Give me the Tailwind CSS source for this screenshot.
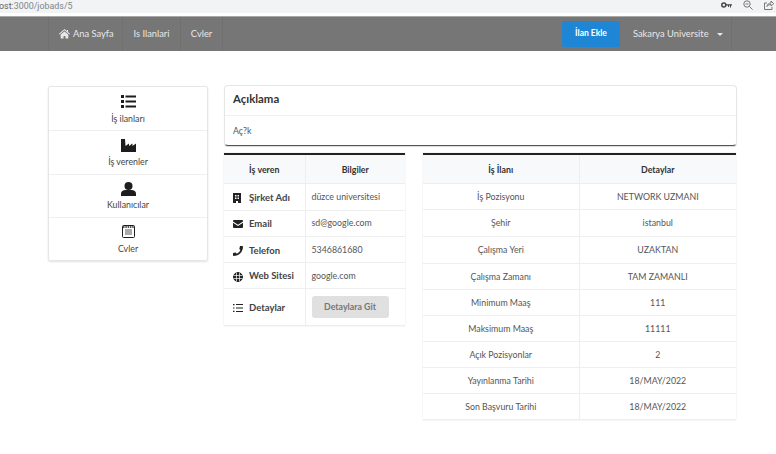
<!DOCTYPE html>
<html lang="en">
<head>
  <meta charset="UTF-8" />
  <meta name="viewport" content="width=device-width, initial-scale=1.0" />
  <title>Job Ad Details</title>
  <script src="https://cdn.jsdelivr.net/npm/@tailwindcss/browser@4"></script>
</head>
<body class="bg-white text-[#212121] h-[454px] overflow-hidden font-['Lato','Open_Sans',sans-serif] text-[8.8px]">
  <!-- Browser bar -->
  <div class="h-[13px] bg-[#f1f3f4] flex items-center justify-between overflow-hidden">
    <span class="text-[8.9px] text-[#80868b] -ml-[1px] font-['Roboto',sans-serif]"><span class="text-[#5f6368]">ost:</span>3000/jobads/5</span>
    <div class="flex items-center gap-[11px] pr-[2px] -mt-[4px] text-[#5f6368]">
      <svg width="11" height="8" viewBox="0 0 11 8"><circle cx="2.800" cy="4" r="2" fill="none" stroke="#444" stroke-width="1.500"/><path d="M5 3.200h6v1.400h-1v2h-1v-2H8v1.400H7V4.600H5z" fill="#444"/></svg>
      <svg width="10" height="10" viewBox="0 0 10 10" fill="none" stroke="#777" stroke-width="1"><circle cx="4" cy="4" r="3.200"/><path d="M2.500 4h3M6.400 6.400 9.600 9.600"/></svg>
      <svg width="10" height="10" viewBox="0 0 10 10" fill="none" stroke="#777" stroke-width="1"><path d="M3 3H.5v6.500h7.500V7M3 6.500C3 4.500 5 3 7 3V1l2.700 2.700L7 6V4.500c-1.700 0-3 .6-4 2z"/></svg>
    </div>
  </div>
  <div class="h-[3px] bg-white"></div>

  <!-- Navbar -->
  <nav class="h-[35px] bg-[#767676] border-t border-[#a8a8a8] flex justify-between pl-[48px] pr-[44px] text-[9.3px] text-[#e8e8e8]">
    <div class="flex border-l border-[#707070]">
      <a class="flex items-center gap-[3px] w-[74px] pl-[10px] border-r border-[#707070]">
        <svg width="11" height="10" viewBox="0 0 11 10" fill="#e8e8e8"><path d="M5.500 0 0 4.700l.6.7L5.500 1.300l4.900 4.100.6-.7-2-1.700V1H8v1L5.500 0z"/><path d="M1.700 5.600 5.500 2.400l3.800 3.200V9.500H6.500V7h-2v2.500H1.700z"/></svg>
        Ana Sayfa
      </a>
      <a class="flex items-center justify-center w-[58px] border-r border-[#707070]">Is Ilanlari</a>
      <a class="flex items-center justify-center w-[42px] border-r border-[#707070]">Cvler</a>
    </div>
    <div class="flex items-center border-r border-[#707070]">
      <button class="w-[58px] h-[26px] rounded-[2px] bg-[#1f86d6] text-white text-[8.5px] font-bold -mt-[1px]">İlan Ekle</button>
      <a class="flex items-center h-full w-[111px] pl-[13px] gap-[8px]">
        Sakarya Universite
        <span class="w-0 h-0 border-x-[3px] border-x-transparent border-t-[3px] border-t-[#e8e8e8]"></span>
      </a>
    </div>
  </nav>

  <!-- Content -->
  <main class="flex gap-[16px] pl-[48px] pt-[34px]">
    <!-- Sidebar -->
    <aside class="w-[160px] h-[175px] mt-[1px] rounded-[2px] border border-[#e6e6e6] shadow-[0_1px_2px_rgba(0,0,0,0.12)] flex flex-col divide-y divide-[#eeeeee] text-[#444]">
      <a class="flex-1 flex flex-col items-center pt-[8px] gap-[4px]">
        <svg width="15" height="13" viewBox="0 0 15 13" fill="#1d1d1d"><path d="M0 0h3v3H0zM0 5h3v3H0zM0 10h3v3H0zM4.500.5H15v2H4.500zM4.500 5.500H15v2H4.500zM4.500 10.500H15v2H4.500z"/></svg>
        <span>İş ilanları</span>
      </a>
      <a class="flex-1 flex flex-col items-center pt-[8px] gap-[3px]">
        <svg width="15" height="13" viewBox="0 0 15 13" fill="#1d1d1d"><path d="M0 0h4l.5 7L8 4.500V7l3.500-2.500V7L15 4.500V13H0z"/></svg>
        <span>İş verenler</span>
      </a>
      <a class="flex-1 flex flex-col items-center pt-[7px] gap-[2px]">
        <svg width="15" height="14" viewBox="0 0 15 14" fill="#1d1d1d"><circle cx="7.500" cy="4" r="4"/><path d="M0 14v-2.500C0 9.500 2 8 4.500 8h6C13 8 15 9.500 15 11.500V14z"/></svg>
        <span>Kullanıcılar</span>
      </a>
      <a class="flex-1 flex flex-col items-center pt-[7px] gap-[4px]">
        <svg width="13" height="13" viewBox="0 0 13 13" fill="none" stroke="#1d1d1d"><rect x=".5" y=".5" width="12" height="12" rx="1"/><path d="M1 2h11" stroke-width="1.500" stroke-dasharray="1.500 .8"/><path d="M3 5h7M3 7h7M3 9h7" stroke="#555"/></svg>
        <span>Cvler</span>
      </a>
    </aside>

    <!-- Right column -->
    <div class="w-[513px]">
      <section class="h-[61px] rounded-[4px] border border-[#e6e6e6] border-b-[#555] shadow-[0_1px_1px_rgba(0,0,0,0.15)]">
        <h2 class="h-[30px] flex items-center px-[8px] pb-[3px] text-[11.400px] font-bold border-b border-[#f0f0f0] text-[#333]">Açıklama</h2>
        <p class="h-[29px] flex items-center px-[8px] text-[#555]">Aç?k</p>
      </section>

      <div class="flex items-start gap-[18px] mt-[7px]">
        <!-- Employer table -->
        <table class="w-[181px] border-collapse border-t-2 border-[#222] table-fixed shadow-[0_0_1px_rgba(0,0,0,0.2)]">
          <thead>
            <tr class="h-[29px] bg-[#f8f9fa] font-bold border-b border-[#eeeeee] text-[#333]">
              <th class="w-[81px] border-r border-[#eeeeee] pt-[1px]">İş veren</th>
              <th class="pt-[1px]">Bilgiler</th>
            </tr>
          </thead>
          <tbody class="text-[#555]">
            <tr class="h-[27px] border-b border-[#eeeeee]">
              <td class="border-r border-[#eeeeee] pl-[9px]">
                <div class="flex items-center gap-[8px] mt-[3px] text-[9.500px] font-bold text-[#444]">
                  <svg width="8" height="10" viewBox="0 0 8 10" fill="#222"><path d="M0 0h8v10H5V8H3v2H0zM2 2v1.500h1.500V2zM4.500 2v1.500H6V2zM2 4.500V6h1.500V4.500zM4.500 4.500V6H6V4.500z"/></svg>
                  Şirket Adı
                </div>
              </td>
              <td class="pl-[6px]">düzce universitesi</td>
            </tr>
            <tr class="h-[26px] border-b border-[#eeeeee]">
              <td class="border-r border-[#eeeeee] pl-[9px]">
                <div class="flex items-center gap-[6px] mt-[2px] text-[9.500px] font-bold text-[#444]">
                  <svg width="10" height="8" viewBox="0 0 10 8" fill="#222"><path d="M0 1a1 1 0 0 1 1-1h8a1 1 0 0 1 1 1v.4L5 4.700 0 1.400zM0 2.700 5 6l5-3.300V7a1 1 0 0 1-1 1H1a1 1 0 0 1-1-1z"/></svg>
                  Email
                </div>
              </td>
              <td class="pl-[6px]">sd@google.com</td>
            </tr>
            <tr class="h-[26px] border-b border-[#eeeeee]">
              <td class="border-r border-[#eeeeee] pl-[9px] pt-[1px]">
                <div class="flex items-center gap-[6px] mt-[3px] text-[9.500px] font-bold text-[#444]">
                  <svg width="10" height="10" viewBox="0 0 10 10" fill="#222"><path d="M7 0h2.500L10 .5C10 6 6 10 .5 10L0 9.500V7l2.700-.6 1 1.300c1.700-.8 3-2.200 3.700-3.800L6.300 3z"/></svg>
                  Telefon
                </div>
              </td>
              <td class="pl-[6px] pt-[1px]">5346861680</td>
            </tr>
            <tr class="h-[26px] border-b border-[#eeeeee]">
              <td class="border-r border-[#eeeeee] pl-[9px] pt-[1px]">
                <div class="flex items-center gap-[6px] mt-[2px] text-[9.500px] font-bold text-[#444]">
                  <svg width="10" height="10" viewBox="0 0 10 10" fill="none" stroke="#222"><circle cx="5" cy="5" r="4.500" fill="#222"/><path d="M.5 3.500h9M.5 6.500h9M3.500.5v9M6.500.5v9" stroke="#fff" stroke-width=".7"/></svg>
                  Web Sitesi
                </div>
              </td>
              <td class="pl-[6px] pt-[1px]">google.com</td>
            </tr>
            <tr class="h-[37px] border-b border-[#eeeeee]">
              <td class="border-r border-[#eeeeee] pl-[9px]">
                <div class="flex items-center gap-[6px] mt-[3px] text-[9.500px] font-bold text-[#444]">
                  <svg width="10" height="8" viewBox="0 0 10 8" fill="#222"><path d="M0 0h1.500v1.200H0zM0 3.400h1.500v1.200H0zM0 6.800h1.500V8H0zM3 .1h7v1H3zM3 3.500h7v1H3zM3 6.900h7v1H3z"/></svg>
                  Detaylar
                </div>
              </td>
              <td class="pl-[6px]">
                <button class="w-[77px] h-[22px] rounded-[3px] bg-[#e0e0e0] text-[#777] font-bold">Detaylara Git</button>
              </td>
            </tr>
          </tbody>
        </table>

        <!-- Job ad table -->
        <table class="w-[313px] border-collapse border-t-2 border-[#222] table-fixed text-center shadow-[0_0_1px_rgba(0,0,0,0.2)]">
          <thead>
            <tr class="h-[29px] bg-[#f8f9fa] font-bold border-b border-[#eeeeee] text-[#333]">
              <th class="w-[156px] border-r border-[#eeeeee] pt-[1px]">İş İlanı</th>
              <th class="pt-[1px]">Detaylar</th>
            </tr>
          </thead>
          <tbody class="text-[#555] [&_td]:pt-[1px]">
            <tr class="h-[26px] border-b border-[#eeeeee]"><td class="border-r border-[#eeeeee]">İş Pozisyonu</td><td>NETWORK UZMANI</td></tr>
            <tr class="h-[27px] border-b border-[#eeeeee]"><td class="border-r border-[#eeeeee]">Şehir</td><td>istanbul</td></tr>
            <tr class="h-[27px] border-b border-[#eeeeee]"><td class="border-r border-[#eeeeee]">Çalışma Yeri</td><td>UZAKTAN</td></tr>
            <tr class="h-[26px] border-b border-[#eeeeee]"><td class="border-r border-[#eeeeee]">Çalışma Zamanı</td><td>TAM ZAMANLI</td></tr>
            <tr class="h-[26px] border-b border-[#eeeeee]"><td class="border-r border-[#eeeeee]">Minimum Maaş</td><td>111</td></tr>
            <tr class="h-[26px] border-b border-[#eeeeee]"><td class="border-r border-[#eeeeee]">Maksimum Maaş</td><td>11111</td></tr>
            <tr class="h-[26px] border-b border-[#eeeeee]"><td class="border-r border-[#eeeeee]">Açık Pozisyonlar</td><td>2</td></tr>
            <tr class="h-[26px] border-b border-[#eeeeee]"><td class="border-r border-[#eeeeee]">Yayınlanma Tarihi</td><td>18/MAY/2022</td></tr>
            <tr class="h-[26px] border-b border-[#eeeeee]"><td class="border-r border-[#eeeeee]">Son Başvuru Tarihi</td><td>18/MAY/2022</td></tr>
          </tbody>
        </table>
      </div>
    </div>
  </main>
</body>
</html>
